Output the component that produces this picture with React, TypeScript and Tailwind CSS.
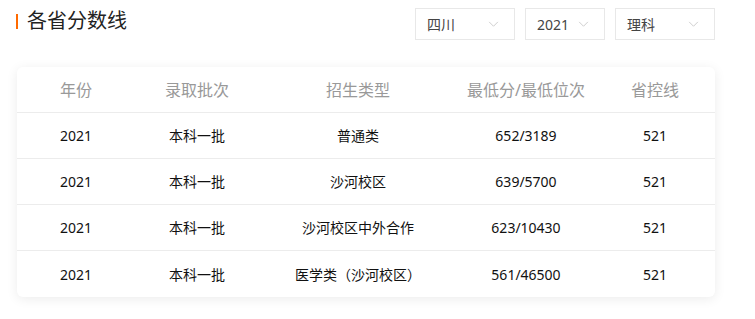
const ROWS = [
  { year: '2021', batch: '本科一批', type: '普通类', score: '652/3189', line: '521' },
  { year: '2021', batch: '本科一批', type: '沙河校区', score: '639/5700', line: '521' },
  { year: '2021', batch: '本科一批', type: '沙河校区中外合作', score: '623/10430', line: '521' },
  { year: '2021', batch: '本科一批', type: '医学类（沙河校区）', score: '561/46500', line: '521' },
]

const SELECTS = [
  { label: '四川', w: 'w-[100px]' },
  { label: '2021', w: 'w-[80px]' },
  { label: '理科', w: 'w-[100px]' },
]

const cols = 'grid grid-cols-[118px_124px_198px_138px_1fr] items-center text-center'

function Chevron() {
  return (
    <svg viewBox="0 0 12 8" fill="none" className="w-[11px] h-[7px]" aria-hidden="true">
      <path d="M1 1l5 5 5-5" stroke="#c8c8c8" strokeWidth="1" />
    </svg>
  )
}

export default function App() {
  return (
    <div className="w-[755px] h-[319px] bg-white" style={{ fontFamily: '"Noto Sans", "Noto Sans CJK SC", sans-serif' }}>
      {/* Top bar */}
      <div className="flex items-start justify-between pl-4 pr-10 pt-2">
        <div className="flex items-center gap-[9px] mt-[5px]">
          <div className="w-[2px] h-[15px] bg-[#ff6a00]" />
          <h1 className="text-[20px] leading-[16px] text-[#222]">各省分数线</h1>
        </div>
        <div className="flex gap-[10px]">
          {SELECTS.map(s => (
            <div
              key={s.label}
              className={`${s.w} h-[32px] border border-[#e8e8e8] flex items-center justify-between pl-[11px] pr-[15px] text-[14px] text-[#444]`}
            >
              <span>{s.label}</span>
              <Chevron />
            </div>
          ))}
        </div>
      </div>

      {/* Card */}
      <div className="mx-[17px] mt-[27px] w-[698px] rounded-[6px] bg-white shadow-[0_2px_12px_rgba(0,0,0,0.08)] overflow-hidden">
        <div className={`${cols} h-[46px] border-b border-[#ececec] text-[16px] text-[#999]`}>
          <div>年份</div>
          <div>录取批次</div>
          <div>招生类型</div>
          <div>最低分/最低位次</div>
          <div>省控线</div>
        </div>
        {ROWS.map((r, i) => (
          <div
            key={i}
            className={`${cols} h-[46px] text-[14px] text-[#111] ${i < ROWS.length - 1 ? 'border-b border-[#ececec]' : ''}`}
          >
            <div>{r.year}</div>
            <div>{r.batch}</div>
            <div>{r.type}</div>
            <div>{r.score}</div>
            <div>{r.line}</div>
          </div>
        ))}
      </div>
    </div>
  )
}
